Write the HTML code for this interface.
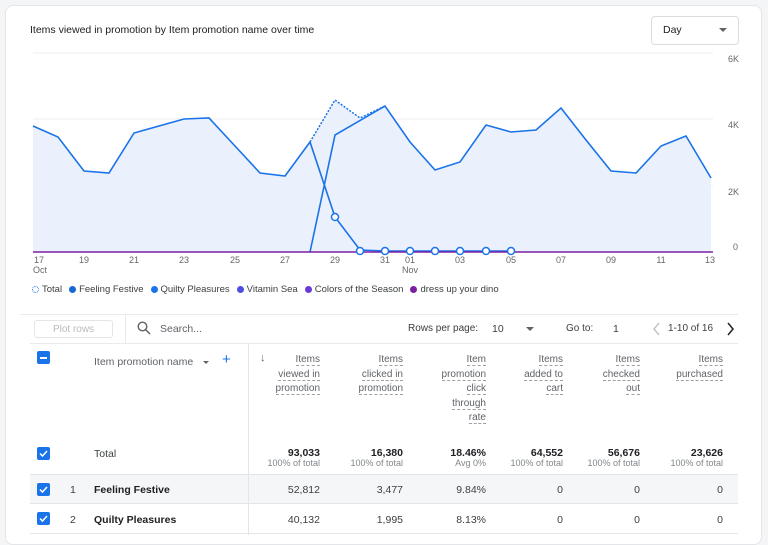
<!DOCTYPE html>
<html><head><style>
*{margin:0;padding:0;box-sizing:border-box}
body{width:768px;height:535px;background:#f4f5f7;font-family:"Liberation Sans",sans-serif;color:#3c4043;position:relative;overflow:hidden}
.card{position:absolute;left:5px;top:5px;width:757px;height:540px;background:#fff;border:1px solid #e3e5e8;border-radius:8px}
.abs{position:absolute}
.t{font-size:10.5px;white-space:nowrap}
.ax{font-size:9px;color:#666;position:absolute;text-align:center;width:24px}
.lg{font-size:9.5px;color:#3c4043;display:inline-flex;align-items:center;margin-right:7px}
.dot{width:7px;height:7px;border-radius:50%;display:inline-block;margin-right:3px}
.hd{position:absolute;font-size:10px;color:#5f6368;text-align:right;line-height:14.5px;top:353px}
.hd span{border-bottom:1px dashed #9aa0a6}
.num{position:absolute;text-align:right;font-size:10.5px;color:#3c4043}
.cb{position:absolute;width:13px;height:13px;background:#1a73e8;border-radius:2px;left:37px}
.cb svg{position:absolute;left:1px;top:1px}
</style></head><body>
<div class="card"></div>
<div class="abs t" style="left:30px;top:24px;font-size:10.5px;color:#202124">Items viewed in promotion by Item promotion name over time</div>
<div class="abs" style="left:651px;top:16px;width:88px;height:29px;border:1px solid #dadce0;border-radius:4px"></div>
<div class="abs t" style="left:663px;top:24px;color:#202124">Day</div>
<div class="abs" style="left:719px;top:28px;width:0;height:0;border-left:4px solid transparent;border-right:4px solid transparent;border-top:4px solid #5f6368"></div>

<svg class="abs" style="left:0;top:0" width="768" height="300">
<g stroke="#eceef0" stroke-width="1">
<line x1="33" y1="53" x2="713" y2="53"/><line x1="33" y1="119" x2="713" y2="119"/><line x1="33" y1="186" x2="713" y2="186"/></g>
<polygon fill="#eaf1fc" points="33,126 58,137 84,171 109,173 134,133 184,119 209,118 235,146 260,173 285,176 310,142 335,100 360,118 385,106 410,142 435,170 460,162 486,125 511,132 536,130 561,108 586,140 611,171 636,173 661,146 686,136 711,178 711,252 33,252"/>
<polyline fill="none" stroke="#1a73e8" stroke-width="1.5" stroke-dasharray="2,1.5" points="310,142 335,100 360,118 385,106"/>
<polyline fill="none" stroke="#1a73e8" stroke-width="1.6" points="33,126 58,137 84,171 109,173 134,133 184,119 209,118 235,146 260,173 285,176 310,142 335,217 360,250 385,251 410,251 435,251 460,251 486,251 511,251"/>
<polyline fill="none" stroke="#1a73e8" stroke-width="1.6" points="310,252 335,135 385,106 410,142 435,170 460,162 486,125 511,132 536,130 561,108 586,140 611,171 636,173 661,146 686,136 711,178"/>
<line x1="33" y1="252" x2="713" y2="252" stroke="#7b1fa2" stroke-width="1.5"/>
<g fill="#fff" stroke="#1a73e8" stroke-width="1.5">
<circle cx="335" cy="217" r="3.5"/><circle cx="360" cy="251" r="3.5"/><circle cx="385" cy="251" r="3.5"/><circle cx="410" cy="251" r="3.5"/><circle cx="435" cy="251" r="3.5"/><circle cx="460" cy="251" r="3.5"/><circle cx="486" cy="251" r="3.5"/><circle cx="511" cy="251" r="3.5"/></g>
<g font-size="9" fill="#666" font-family="Liberation Sans">
<text x="728" y="62">6K</text><text x="728" y="128">4K</text><text x="728" y="195">2K</text><text x="733" y="250">0</text></g>
</svg>
<div class="ax" style="left:27px;top:255px">17</div><div class="ax" style="left:28px;top:265px">Oct</div>
<div class="ax" style="left:72px;top:255px">19</div><div class="ax" style="left:122px;top:255px">21</div><div class="ax" style="left:172px;top:255px">23</div><div class="ax" style="left:223px;top:255px">25</div><div class="ax" style="left:273px;top:255px">27</div><div class="ax" style="left:323px;top:255px">29</div><div class="ax" style="left:373px;top:255px">31</div><div class="ax" style="left:398px;top:255px">01</div><div class="ax" style="left:398px;top:265px">Nov</div><div class="ax" style="left:448px;top:255px">03</div><div class="ax" style="left:499px;top:255px">05</div><div class="ax" style="left:549px;top:255px">07</div><div class="ax" style="left:599px;top:255px">09</div><div class="ax" style="left:649px;top:255px">11</div><div class="ax" style="left:698px;top:255px">13</div>

<div class="abs" style="left:32px;top:284px;display:flex">
<span class="lg"><span class="dot" style="border:1.5px dotted #1a73e8"></span>Total</span>
<span class="lg"><span class="dot" style="background:#1967d2"></span>Feeling Festive</span>
<span class="lg"><span class="dot" style="background:#1a73e8"></span>Quilty Pleasures</span>
<span class="lg"><span class="dot" style="background:#4c4fe0"></span>Vitamin Sea</span>
<span class="lg"><span class="dot" style="background:#6a3ad8"></span>Colors of the Season</span>
<span class="lg"><span class="dot" style="background:#7b1fa2"></span>dress up your dino</span>
</div>

<div class="abs" style="left:20px;top:314px;width:718px;border-top:1px solid #e8eaed"></div>
<div class="abs" style="left:125px;top:314px;height:29px;border-left:1px solid #e8eaed"></div>
<div class="abs" style="left:34px;top:320px;width:79px;height:18px;border:1px solid #e3e5e8;border-radius:3px;font-size:10px;color:#bbb;text-align:center;line-height:17px">Plot rows</div>
<svg class="abs" style="left:137px;top:321px" width="14" height="14"><circle cx="5.5" cy="5.5" r="4.3" fill="none" stroke="#5f6368" stroke-width="1.4"/><line x1="8.6" y1="8.6" x2="13" y2="13" stroke="#5f6368" stroke-width="1.5"/></svg>
<div class="abs t" style="left:160px;top:323px;color:#5f6368">Search...</div>
<div class="abs t" style="left:408px;top:323px;font-size:10px">Rows per page:</div>
<div class="abs t" style="left:492px;top:323px">10</div>
<div class="abs" style="left:526px;top:327px;border-left:4px solid transparent;border-right:4px solid transparent;border-top:4px solid #5f6368"></div>
<div class="abs t" style="left:566px;top:323px;font-size:10px">Go to:</div>
<div class="abs t" style="left:613px;top:323px">1</div>
<svg class="abs" style="left:652px;top:322px" width="90" height="14"><polyline points="7,1 2,7 7,13" fill="none" stroke="#bbb" stroke-width="1.3"/><polyline points="76,1 81,7 76,13" fill="none" stroke="#202124" stroke-width="1.5"/></svg>
<div class="abs t" style="left:668px;top:323px;font-size:10px">1-10 of 16</div>

<div class="abs" style="left:30px;top:343px;width:708px;border-top:1px solid #e8eaed"></div>
<div class="abs" style="left:248px;top:343px;height:192px;border-left:1px solid #e3e5e8"></div>
<div class="cb" style="top:351px"><div style="position:absolute;left:3px;top:6px;width:7px;height:1.5px;background:#fff"></div></div>
<div class="abs t" style="left:94px;top:356px;color:#5f6368;font-size:10.5px">Item promotion name</div>
<div class="abs" style="left:203px;top:361px;border-left:3px solid transparent;border-right:3px solid transparent;border-top:3px solid #5f6368"></div>
<div class="abs" style="left:222px;top:351px;color:#1a73e8;font-size:15px">+</div>
<div class="abs" style="left:260px;top:352px;font-size:11px;color:#5f6368">↓</div>
<div class="hd" style="right:448px"><span>Items</span><br><span>viewed in</span><br><span>promotion</span></div>
<div class="hd" style="right:365px"><span>Items</span><br><span>clicked in</span><br><span>promotion</span></div>
<div class="hd" style="right:282px"><span>Item</span><br><span>promotion</span><br><span>click</span><br><span>through</span><br><span>rate</span></div>
<div class="hd" style="right:205px"><span>Items</span><br><span>added to</span><br><span>cart</span></div>
<div class="hd" style="right:128px"><span>Items</span><br><span>checked</span><br><span>out</span></div>
<div class="hd" style="right:45px"><span>Items</span><br><span>purchased</span></div>

<div class="cb" style="top:447px"><svg width="11" height="11"><polyline points="2,5.5 4.5,8 9,3" fill="none" stroke="#fff" stroke-width="1.5"/></svg></div>
<div class="abs t" style="left:94px;top:448px">Total</div>
<div class="num" style="right:448px;top:447px;font-weight:bold;color:#202124">93,033</div>
<div class="num" style="right:365px;top:447px;font-weight:bold;color:#202124">16,380</div>
<div class="num" style="right:282px;top:447px;font-weight:bold;color:#202124">18.46%</div>
<div class="num" style="right:205px;top:447px;font-weight:bold;color:#202124">64,552</div>
<div class="num" style="right:128px;top:447px;font-weight:bold;color:#202124">56,676</div>
<div class="num" style="right:45px;top:447px;font-weight:bold;color:#202124">23,626</div>
<div class="num" style="right:448px;top:458px;font-size:9px;color:#80868b">100% of total</div>
<div class="num" style="right:365px;top:458px;font-size:9px;color:#80868b">100% of total</div>
<div class="num" style="right:282px;top:458px;font-size:9px;color:#80868b">Avg 0%</div>
<div class="num" style="right:205px;top:458px;font-size:9px;color:#80868b">100% of total</div>
<div class="num" style="right:128px;top:458px;font-size:9px;color:#80868b">100% of total</div>
<div class="num" style="right:45px;top:458px;font-size:9px;color:#80868b">100% of total</div>

<div class="abs" style="left:30px;top:474px;width:708px;height:30px;background:#f5f6f7;border-top:1px solid #e3e5e8;border-bottom:1px solid #e3e5e8"></div>
<div class="abs" style="left:248px;top:474px;height:61px;border-left:1px solid #e3e5e8"></div>
<div class="cb" style="top:483px"><svg width="11" height="11"><polyline points="2,5.5 4.5,8 9,3" fill="none" stroke="#fff" stroke-width="1.5"/></svg></div>
<div class="abs t" style="left:70px;top:484px">1</div>
<div class="abs t" style="left:94px;top:484px;font-weight:bold;color:#202124">Feeling Festive</div>
<div class="num" style="right:448px;top:484px">52,812</div><div class="num" style="right:365px;top:484px">3,477</div><div class="num" style="right:282px;top:484px">9.84%</div><div class="num" style="right:205px;top:484px">0</div><div class="num" style="right:128px;top:484px">0</div><div class="num" style="right:45px;top:484px">0</div>

<div class="abs" style="left:30px;top:533px;width:708px;border-top:1px solid #e3e5e8"></div>
<div class="cb" style="top:512px"><svg width="11" height="11"><polyline points="2,5.5 4.5,8 9,3" fill="none" stroke="#fff" stroke-width="1.5"/></svg></div>
<div class="abs t" style="left:70px;top:514px">2</div>
<div class="abs t" style="left:94px;top:514px;font-weight:bold;color:#202124">Quilty Pleasures</div>
<div class="num" style="right:448px;top:514px">40,132</div><div class="num" style="right:365px;top:514px">1,995</div><div class="num" style="right:282px;top:514px">8.13%</div><div class="num" style="right:205px;top:514px">0</div><div class="num" style="right:128px;top:514px">0</div><div class="num" style="right:45px;top:514px">0</div>
</body></html>
